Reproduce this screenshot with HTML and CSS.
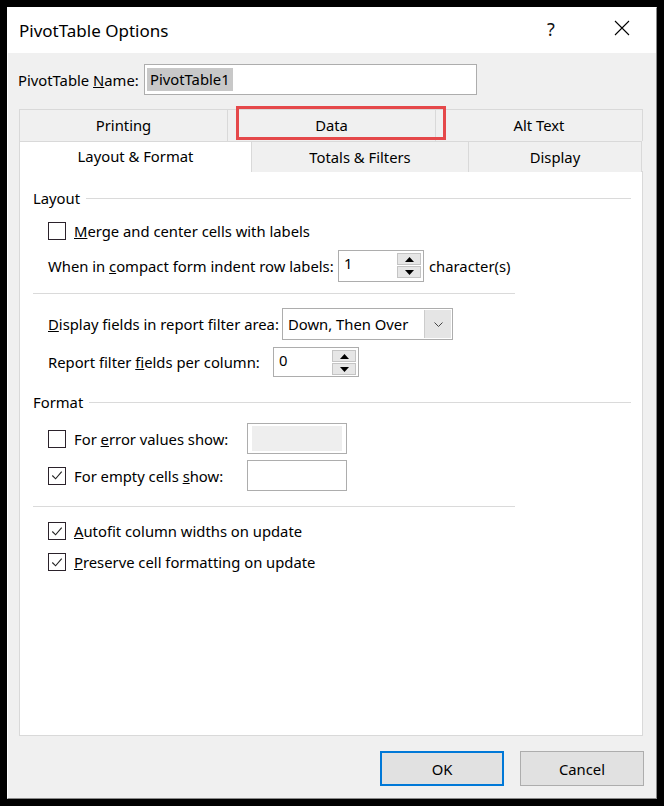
FILE: index.html
```html
<!DOCTYPE html>
<html>
<head>
<meta charset="utf-8">
<link rel="stylesheet" href="styles.css">
</head>
<body>
<div class="dialog">
  <div class="titlebar">
    <span class="title">PivotTable Options</span>
    <span class="help">?</span>
    <svg class="close" width="16" height="16" viewBox="0 0 16 16"><path d="M1 1L15 15M15 1L1 15" stroke="#000" stroke-width="1.1" fill="none"/></svg>
  </div>
  <div class="content">
    <div class="name-row">
      <span class="name-label">PivotTable <u>N</u>ame:</span>
      <div class="name-input"><span class="sel">PivotTable1</span></div>
    </div>
    <div class="tabs">
      <div class="tab-row rear">
        <div class="tab t-rear">Printing</div>
        <div class="tab t-rear">Data</div>
        <div class="tab t-rear last">Alt Text</div>
      </div>
      <div class="tab-row front">
        <div class="tab active w1">Layout &amp; Format</div>
        <div class="tab w2">Totals &amp; Filters</div>
        <div class="tab w3 last">Display</div>
      </div>
      <div class="panel">
        <div class="section-head h-layout"><span>Layout</span><div class="rule"></div></div>
        <div class="row check-row r-merge">
          <span class="cb"></span><span class="lbl"><u>M</u>erge and center cells with labels</span>
        </div>
        <div class="row r-compact">
          <span class="lbl lw-compact">When in <u>c</u>ompact form indent row labels:</span>
          <div class="spinner sp-compact">
            <span class="val">1</span>
            <div class="spin">
              <span class="sbtn"><svg width="9" height="5" viewBox="0 0 9 5"><path d="M0 5L4.5 0L9 5Z" fill="#000"/></svg></span>
              <span class="sbtn"><svg width="9" height="5" viewBox="0 0 9 5"><path d="M0 0L4.5 5L9 0Z" fill="#000"/></svg></span>
            </div>
          </div>
          <span class="lbl after">character(s)</span>
        </div>
        <div class="sep s1"></div>
        <div class="row r-display">
          <span class="lbl lw-display"><u>D</u>isplay fields in report filter area:</span>
          <div class="combo">
            <span class="val">Down, Then Over</span>
            <span class="drop"><svg width="9" height="5" viewBox="0 0 9 5"><path d="M0.5 0.5L4.5 4.5L8.5 0.5" stroke="#444" stroke-width="1" fill="none"/></svg></span>
          </div>
        </div>
        <div class="row r-report">
          <span class="lbl lw-report">Report filter <u>f</u>ields per column:</span>
          <div class="spinner sp-report">
            <span class="val">0</span>
            <div class="spin">
              <span class="sbtn"><svg width="9" height="5" viewBox="0 0 9 5"><path d="M0 5L4.5 0L9 5Z" fill="#000"/></svg></span>
              <span class="sbtn"><svg width="9" height="5" viewBox="0 0 9 5"><path d="M0 0L4.5 5L9 0Z" fill="#000"/></svg></span>
            </div>
          </div>
        </div>
        <div class="section-head h-format"><span>Format</span><div class="rule"></div></div>
        <div class="row check-row r-error">
          <span class="cb"></span><span class="lbl lw-fmt">For <u>e</u>rror values show:</span>
          <div class="textbox disabled"><span class="fill"></span></div>
        </div>
        <div class="row check-row r-empty">
          <span class="cb checked"><svg width="17" height="17" viewBox="0 0 17 17"><path d="M3.5 8.5L7 12L13.5 4.5" stroke="#222" stroke-width="1.2" fill="none"/></svg></span><span class="lbl lw-fmt">For empty cells <u>s</u>how:</span>
          <div class="textbox"></div>
        </div>
        <div class="sep s2"></div>
        <div class="row check-row r-autofit">
          <span class="cb checked"><svg width="17" height="17" viewBox="0 0 17 17"><path d="M3.5 8.5L7 12L13.5 4.5" stroke="#222" stroke-width="1.2" fill="none"/></svg></span><span class="lbl"><u>A</u>utofit column widths on update</span>
        </div>
        <div class="row check-row r-preserve">
          <span class="cb checked"><svg width="17" height="17" viewBox="0 0 17 17"><path d="M3.5 8.5L7 12L13.5 4.5" stroke="#222" stroke-width="1.2" fill="none"/></svg></span><span class="lbl"><u>P</u>reserve cell formatting on update</span>
        </div>
      </div>
    </div>
    <div class="footer">
      <button class="btn ok">OK</button>
      <button class="btn">Cancel</button>
    </div>
  </div>
  <div class="highlight"></div>
</div>
</body>
</html>
```

FILE: styles.css
```css
html, body {
  margin: 0;
  padding: 0;
  background: #000;
}
body {
  width: 664px;
  height: 806px;
  overflow: hidden;
  font-family: "Noto Sans", "Open Sans", sans-serif;
  font-size: 14.8px;
  color: #000;
}
.dialog {
  position: relative;
  margin: 7px 0 0 7px;
  width: 650px;
  height: 792px;
  box-sizing: border-box;
  border: 1px solid #8a8a8a;
  border-top-color: #fff;
  border-left-color: #fff;
  background: #f0f0f0;
  display: flex;
  flex-direction: column;
}
.titlebar {
  height: 45px;
  background: #fff;
  display: flex;
  align-items: center;
  padding-left: 11px;
  flex-shrink: 0;
}
.title {
  font-size: 17px;
  flex: 1;
  margin-top: 0px;
}
.help {
  font-size: 18px;
  width: 20px;
  margin-right: 47px;
  margin-top: -4px;
  color: #111;
}
.close {
  margin-right: 26px;
  margin-top: -6px;
}
.content {
  flex: 1;
  display: flex;
  flex-direction: column;
}
.name-row {
  margin-top: 11px;
  height: 31px;
  display: flex;
  align-items: center;
  padding-left: 10px;
}
.name-label {
  width: 126px;
}
.name-input {
  width: 333px;
  height: 31px;
  box-sizing: border-box;
  border: 1px solid #adadad;
  background: #fff;
  display: flex;
  align-items: center;
  padding-left: 2px;
}
.sel {
  background: #c8c8c8;
  padding: 1px 3px 2px 3px;
  line-height: 20px;
}
.tabs {
  margin-top: 14px;
  margin-left: 11px;
  width: 624px;
  display: flex;
  flex-direction: column;
}
.tab-row {
  display: flex;
}
.tab {
  box-sizing: border-box;
  border-top: 1px solid #d9d9d9;
  border-left: 1px solid #d9d9d9;
  display: flex;
  align-items: center;
  justify-content: center;
  background: #f0f0f0;
}
.tab.last {
  border-right: 1px solid #d9d9d9;
}
.rear .tab {
  width: 208px;
  height: 32px;
  padding-bottom: 1px;
}
.front {
  margin-bottom: -1px;
  position: relative;
  z-index: 1;
}
.front .tab {
  height: 31px;
  padding-top: 0px;
}
.front .w1 { width: 233px; }
.front .w2 { width: 217px; }
.front .w3 { width: 174px; }
.tab.active {
  background: #fff;
  border-right: 1px solid #d9d9d9;
  margin-right: -1px;
  padding-bottom: 3px;
}
.panel {
  height: 565px;
  box-sizing: border-box;
  border: 1px solid #d9d9d9;
  background: #fff;
  display: flex;
  flex-direction: column;
}
.section-head {
  display: flex;
  align-items: center;
  height: 20px;
  margin-left: 13px;
  margin-right: 11px;
}
.section-head .rule {
  flex: 1;
  height: 1px;
  background: #dadada;
  margin-left: 6px;
}
.h-layout { margin-top: 16px; }
.h-format { margin-top: 15px; }
.row {
  display: flex;
  align-items: center;
  margin-left: 28px;
}
.check-row .cb {
  width: 18px;
  height: 18px;
  box-sizing: border-box;
  border: 1px solid #2b222b;
  margin-right: 8px;
  display: flex;
  align-items: center;
  justify-content: center;
  flex-shrink: 0;
}
.cb svg {
  display: block;
}
.r-merge { margin-top: 11px; height: 24px; }
.r-compact { margin-top: 7px; height: 32px; }
.r-display { margin-top: 14px; height: 32px; }
.r-report { margin-top: 7px; height: 30px; }
.r-error { margin-top: 11px; height: 31px; }
.r-empty { margin-top: 6px; height: 31px; }
.r-autofit { margin-top: 12px; height: 24px; }
.r-preserve { margin-top: 7px; height: 24px; }
.lw-compact { width: 290px; }
.lw-display { width: 234px; }
.lw-report { width: 225px; }
.lw-fmt { width: 173px; }
.lbl { white-space: nowrap; }
.after { margin-left: 5px; }
.sep {
  height: 1px;
  background: #dadada;
  margin-left: 13px;
  width: 482px;
}
.s1 { margin-top: 11px; }
.s2 { margin-top: 15px; }
.spinner {
  height: 100%;
  box-sizing: border-box;
  border: 1px solid #adadad;
  background: #fff;
  display: flex;
  align-items: flex-start;
}
.sp-compact { width: 86px; }
.sp-report { width: 86px; }
.spinner .val {
  flex: 1;
  padding-left: 5px;
  padding-top: 2px;
}
.spin {
  display: flex;
  flex-direction: column;
  margin: 2px 2px 0 0;
}
.sbtn {
  width: 24px;
  height: 12px;
  box-sizing: border-box;
  background: #e6e6e6;
  border: 1px solid #c4c4c4;
  display: flex;
  align-items: center;
  justify-content: center;
}
.sbtn + .sbtn {
  margin-top: 1px;
}
.sbtn svg { display: block; }
.combo {
  width: 171px;
  height: 100%;
  box-sizing: border-box;
  border: 1px solid #adadad;
  background: #fff;
  display: flex;
  align-items: stretch;
}
.combo .val {
  flex: 1;
  padding-left: 5px;
  display: flex;
  align-items: center;
}
.combo .drop {
  width: 26px;
  background: #e5e5e5;
  border-left: 1px solid #cccccc;
  margin: 1px;
  display: flex;
  align-items: center;
  justify-content: center;
}
.textbox {
  width: 100px;
  height: 100%;
  box-sizing: border-box;
  border: 1px solid #adadad;
  background: #fff;
  display: flex;
  padding: 2px 4px 2px 4px;
}
.textbox .fill {
  flex: 1;
  background: #eeeeee;
}
.footer {
  display: flex;
  justify-content: flex-end;
  gap: 16px;
  margin-top: 15px;
  padding-right: 12px;
}
.btn {
  width: 124px;
  height: 35px;
  box-sizing: border-box;
  border: 1px solid #adadad;
  background: #e1e1e1;
  font-family: "Noto Sans", "Open Sans", sans-serif;
  font-size: 14.8px;
  color: #000;
  padding: 0;
}
.btn.ok {
  border: 2px solid #0078d7;
}
.highlight {
  position: absolute;
  left: 228px;
  top: 98px;
  width: 210px;
  height: 34px;
  box-sizing: border-box;
  border: 3px solid #e5484a;
  z-index: 5;
}
```
